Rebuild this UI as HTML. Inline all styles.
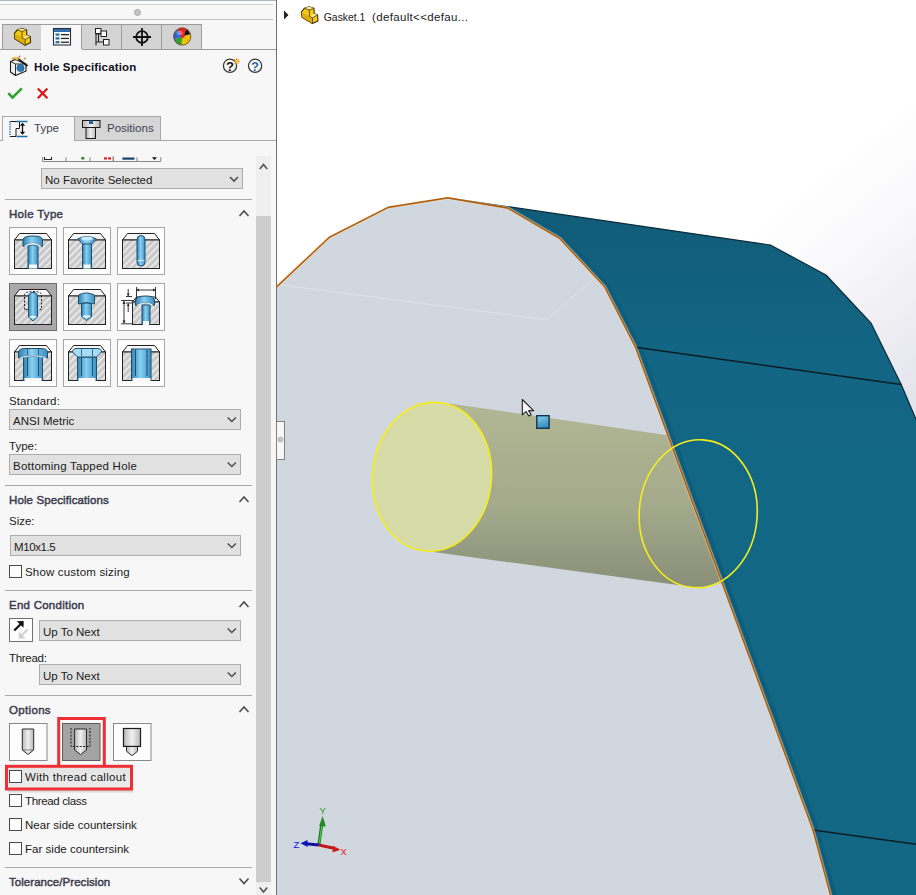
<!DOCTYPE html>
<html><head><meta charset="utf-8">
<style>
*{margin:0;padding:0;box-sizing:border-box}
html,body{width:916px;height:895px;overflow:hidden;background:#fff}
body{position:relative;font-family:"Liberation Sans",sans-serif;font-size:11.5px;color:#1e1e1e}
.a{position:absolute}
#panel{position:absolute;left:0;top:0;width:276px;height:895px;background:#f7f7f7;overflow:hidden}
#vborder{position:absolute;left:276px;top:0;width:1px;height:895px;background:#6f6f6f}
.tab{position:absolute;top:24px;height:25px;background:#d4d4d4;border:1px solid #9c9c9c;border-bottom:none}
.hdr{position:absolute;left:9px;font-weight:normal;font-size:11.5px;color:#3a3a4c;white-space:nowrap;letter-spacing:0px;-webkit-text-stroke:0.45px #3a3a4c}
.lbl{position:absolute;left:9px;white-space:nowrap;color:#1a1a1a}
.dd{position:absolute;height:21px;background:#e1e1e1;border:1px solid #adadad}
.dd span{position:absolute;left:3px;top:4.5px;white-space:nowrap;color:#1a1a1a}
.dd svg{position:absolute;right:4px;top:6px}
.sep{position:absolute;left:5px;width:247px;height:1px;background:#a9a9a9}
.chev{position:absolute;left:237px}
.cb{position:absolute;left:9px;width:13px;height:13px;border:1px solid #4a4a4a;background:#fcfcfc}
.cbl{position:absolute;left:25px;white-space:nowrap;color:#1a1a1a}
.hbtn{position:absolute;width:48px;height:48px;border:1px solid #a0a0a0;background:#fff}
.obtn{position:absolute;top:723px;width:38px;height:38px;border:1px solid #a0a0a0;background:#fff}
</style></head><body>

<div id="panel">
  <!-- top strip -->
  <div class="a" style="left:0;top:0;width:276px;height:1px;background:#a9b6be"></div>
  <div class="a" style="left:0;top:1px;width:276px;height:3px;background:#fafcfd"></div>
  <div class="a" style="left:0;top:4px;width:273px;height:1px;background:#d9d5cd"></div>
  <div class="a" style="left:0;top:19px;width:273px;height:1px;background:#c2c2c2"></div>
  <div class="a" style="left:134px;top:9px;width:7px;height:7px;border-radius:50%;background:#c4c4c4;border:1px solid #a8a8a8"></div>
  <!-- tabs -->
  <div class="a" style="left:0;top:49px;width:276px;height:1px;background:#9c9c9c"></div>
  <div class="tab" style="left:2px;width:40px"></div>
  <div class="a" style="left:41px;top:24px;width:41px;height:26px;background:#f7f7f7;border-top:1px solid #9c9c9c"></div>
  <div class="tab" style="left:81px;width:41px"></div>
  <div class="tab" style="left:121px;width:41px"></div>
  <div class="tab" style="left:161px;width:41px"></div>

  <!-- title -->
  <div class="a" style="left:34px;top:61px;letter-spacing:0.15px;font-weight:bold;font-size:11.5px;color:#101020;white-space:nowrap">Hole Specification</div>

  <!-- Type / Positions tabs -->
  <div class="a" style="left:0;top:140px;width:276px;height:1px;background:#a8a8a8"></div>
  <div class="a" style="left:2px;top:116px;width:73px;height:25px;background:#f7f7f7;border:1px solid #a8a8a8;border-bottom:none"></div>
  <div class="a" style="left:74px;top:116px;width:87px;height:24px;background:#d6d6d6;border:1px solid #a8a8a8;border-bottom:none"></div>
  <div class="a" style="left:34px;top:122px;color:#404050;white-space:nowrap">Type</div>
  <div class="a" style="left:107px;top:122px;color:#404050;white-space:nowrap">Positions</div>

  <!-- favorites -->
  <div class="dd" style="left:41px;top:168px;width:202px"><span>No Favorite Selected</span></div>
  <div class="sep" style="top:199px"></div>

  <div class="hdr" style="top:208px;letter-spacing:0.3px">Hole Type</div>

  <div class="lbl" style="top:395px;letter-spacing:0.12px">Standard:</div>
  <div class="dd" style="left:9px;top:409px;width:232px"><span>ANSI Metric</span></div>
  <div class="lbl" style="top:440px">Type:</div>
  <div class="dd" style="left:9px;top:454px;width:232px"><span style="letter-spacing:0.23px">Bottoming Tapped Hole</span></div>
  <div class="sep" style="top:485px"></div>

  <div class="hdr" style="top:494px;letter-spacing:0.11px">Hole Specifications</div>
  <div class="lbl" style="top:515px">Size:</div>
  <div class="dd" style="left:10px;top:535px;width:231px"><span style="letter-spacing:-0.4px">M10x1.5</span></div>
  <div class="cb" style="top:565px"></div>
  <div class="cbl" style="top:566px;letter-spacing:0.18px">Show custom sizing</div>
  <div class="sep" style="top:590px"></div>

  <div class="hdr" style="top:599px;letter-spacing:0.25px">End Condition</div>
    <div class="dd" style="left:39px;top:620px;width:202px"><span>Up To Next</span></div>
  <div class="lbl" style="top:652px;letter-spacing:-0.3px">Thread:</div>
  <div class="dd" style="left:39px;top:664px;width:202px"><span>Up To Next</span></div>
  <div class="sep" style="top:695px"></div>

  <div class="hdr" style="top:704px;letter-spacing:0.33px">Options</div>

  <div class="a" style="left:7px;top:767px;width:124px;height:21px;background:linear-gradient(#e4e4e4,#ececec)"></div>
  <div class="cb" style="top:770px"></div>
  <div class="cbl" style="top:771px;letter-spacing:0.3px">With thread callout</div>
  <div class="cb" style="top:794px"></div>
  <div class="cbl" style="top:795px;letter-spacing:-0.35px">Thread class</div>
  <div class="cb" style="top:818px"></div>
  <div class="cbl" style="top:819px;letter-spacing:0.03px">Near side countersink</div>
  <div class="cb" style="top:842px"></div>
  <div class="cbl" style="top:843px;letter-spacing:0.03px">Far side countersink</div>
  <div class="sep" style="top:867px"></div>
  <div class="hdr" style="top:876px;letter-spacing:0.05px">Tolerance/Precision</div>

  <!-- scrollbar -->
  <div class="a" style="left:256px;top:156px;width:15px;height:739px;background:#efefef"></div>
  <div class="a" style="left:256px;top:216px;width:15px;height:666px;background:#cdcdcd"></div>
</div>

<svg class="a" style="left:0;top:0" width="276" height="895" viewBox="0 0 276 895">
<!-- tab1 part icon -->
<path d="M14.4,33.3 L17.3,29.8 L21.6,28.4 L26.6,29.8 L26.8,35.2 L30.3,36.6 L30.6,42.6 L25.1,45.3 L14.7,38.8 Z" fill="#f2ca18" stroke="#3e2e00" stroke-width="1.1" stroke-linejoin="round"/>
<path d="M17.3,29.8 L21.6,28.4 L26.6,29.8 L22,31.5 Z" fill="#fbeb9a"/>
<path d="M22,38 L26.8,35.2 L30.3,36.6 L25.2,39.5 Z" fill="#fbe58a"/>
<path d="M14.6,33.6 L22,37.8 L25.2,39.7 L25.1,45 L14.9,38.6 Z" fill="#dcae0c"/>
<path d="M22,31.5 L22,37.8 M25.2,39.5 L25.1,45.2 M17.3,30 L22,31.5 L26.6,29.8 M22,37.8 L25.2,39.5 L30.3,36.6" fill="none" stroke="#4a3800" stroke-width="0.8"/>
<!-- tab2 PM icon -->
<rect x="53.5" y="28.5" width="17" height="16.5" fill="#fff" stroke="#2a2a38" stroke-width="1.1"/>
<rect x="54" y="29" width="16" height="3" fill="#2f6fa6"/>
<rect x="55.5" y="33.5" width="4" height="2.2" fill="#1f6ea8"/><rect x="61" y="34" width="8" height="1.3" fill="#222"/>
<rect x="55.5" y="37.3" width="4" height="2.2" fill="#1f6ea8"/><rect x="61" y="37.8" width="8" height="1.3" fill="#222"/>
<rect x="55.5" y="41.1" width="4" height="2.2" fill="#1f6ea8"/><rect x="61" y="41.6" width="8" height="1.3" fill="#222"/>
<!-- tab3 tree -->
<path d="M96,29 L96,45.5 M96,34 L101,34 M96,42 L103.5,42 M98.5,33 L98.5,42" fill="none" stroke="#222" stroke-width="1.1"/>
<rect x="95.5" y="28.5" width="5.5" height="5" fill="#fff" stroke="#222" stroke-width="1"/>
<rect x="101" y="31" width="5.5" height="5.5" fill="#fff" stroke="#222" stroke-width="1"/>
<rect x="103.5" y="39.5" width="5.5" height="5.5" fill="#fff" stroke="#222" stroke-width="1"/>
<!-- tab4 crosshair -->
<circle cx="142" cy="37" r="5.8" fill="none" stroke="#111" stroke-width="1.8"/>
<path d="M133,37 L151,37 M142,28 L142,46" stroke="#111" stroke-width="1.8"/>
<!-- tab5 appearance ball -->
<g transform="translate(182.2 36.5)">
<path d="M0,0 L-8.08,2.94 A8.6,8.6 0 0 1 -4.93,-7.04 Z" fill="#2f62d8"/>
<path d="M0,0 L-4.93,-7.04 A8.6,8.6 0 0 1 4.30,-7.45 Z" fill="#e42222"/>
<path d="M0,0 L4.30,-7.45 A8.6,8.6 0 0 1 8.31,-2.23 Z" fill="#151515"/>
<path d="M0,0 L8.31,-2.23 A8.6,8.6 0 0 1 -0.75,8.57 Z" fill="#f0c000"/>
<path d="M0,0 L-0.75,8.57 A8.6,8.6 0 0 1 -8.08,2.94 Z" fill="#2ea02e"/>
<path d="M-1,-8 L3.5,-7.5 L2,1.5 L-1.5,1 Z" fill="#e42222"/>
<circle r="8.6" fill="none" stroke="#6a4a30" stroke-width="0.9"/>
<ellipse cx="-2.5" cy="-3.5" rx="3.2" ry="2.2" fill="#fff" opacity="0.3"/>
</g>
<!-- hole spec icon -->
<path d="M10.5,61.5 L15.5,59.5 L26,64 L26,71 L15.5,75.5 L10.5,72 Z" fill="#f0f0f0" stroke="#1a1a1a" stroke-width="1.1" stroke-linejoin="round"/>
<path d="M10.5,61.5 L15.5,64 L26,64 M15.5,64 L15.5,75.5" fill="none" stroke="#1a1a1a" stroke-width="0.9"/>
<circle cx="20.5" cy="68" r="3.6" fill="#2a7ab8" stroke="#1a4a70" stroke-width="0.6"/>
<path d="M17,58 L27.5,66" stroke="#1a1a2a" stroke-width="2.2"/>
<path d="M14,57.5 L18.5,59.5" stroke="#e8c020" stroke-width="2"/>
<circle cx="13" cy="58.5" r="0.9" fill="#e07020"/><circle cx="19.5" cy="56.5" r="0.9" fill="#e07020"/><circle cx="25" cy="58.5" r="0.9" fill="#e07020"/>
<!-- help icons -->
<circle cx="230" cy="65.8" r="6.6" fill="#fafafa" stroke="#3a3a3a" stroke-width="1.3"/>
<text x="230" y="70.6" text-anchor="middle" font-family="Liberation Sans" font-weight="bold" font-size="13" fill="#111">?</text>
<g transform="translate(236.6 61.3)" stroke="#e88a10" stroke-width="1"><path d="M-3.2,0 L3.2,0 M0,-3.2 L0,3.2 M-2.3,-2.3 L2.3,2.3 M-2.3,2.3 L2.3,-2.3"/></g>
<circle cx="236.6" cy="61.3" r="1.6" fill="#f8c030"/>
<circle cx="255.1" cy="65.8" r="6.6" fill="#fafafa" stroke="#3a3a3a" stroke-width="1.3"/>
<text x="255.1" y="70.6" text-anchor="middle" font-family="Liberation Sans" font-weight="bold" font-size="13" fill="#2a6a9a">?</text>
<!-- HOLEICONS -->
<defs>
<pattern id="hatch" width="5" height="5" patternUnits="userSpaceOnUse" patternTransform="rotate(45)">
<rect width="5" height="5" fill="#c9c9c9"/><rect x="0" y="0" width="1.5" height="5" fill="#f0f0f0"/>
</pattern>
<linearGradient id="hb" x1="0" x2="1" y1="0" y2="0">
<stop offset="0" stop-color="#2f80b2"/><stop offset="0.45" stop-color="#8ad0f0"/><stop offset="1" stop-color="#3a8fc2"/>
</linearGradient>
<linearGradient id="gd" x1="0" x2="1" y1="0" y2="0">
<stop offset="0" stop-color="#b8b8b8"/><stop offset="0.5" stop-color="#f0f0f0"/><stop offset="1" stop-color="#b8b8b8"/>
</linearGradient>
</defs>
<rect x="9.5" y="227.5" width="47" height="47" fill="#fdfdfd" stroke="#a6a6a6" stroke-width="1"/>
<path d="M14.5,240 L19.5,233.5 L46.5,233.5 L51.5,240 Z" fill="#f6f6f6" stroke="#222" stroke-width="1"/><rect x="14.5" y="240" width="37.0" height="28.5" fill="url(#hatch)" stroke="#222" stroke-width="1"/>
<rect x="28" y="245" width="10" height="23.5" fill="url(#hb)" stroke="#1d4f6e" stroke-width="1"/>
<path d="M23,246.5 L23,240 Q23,236 33,236 Q42.5,236 42.5,240 L42.5,246.5 Q33,240 23,246.5 Z" fill="url(#hb)" stroke="#1d4f6e" stroke-width="1"/>
<path d="M25,246 Q33,241.5 40.5,246" fill="none" stroke="#e8f6ff" stroke-width="1.3"/>
<rect x="29" y="264.5" width="8" height="4" fill="#f8f8f8"/>
<rect x="63.5" y="227.5" width="47" height="47" fill="#fdfdfd" stroke="#a6a6a6" stroke-width="1"/>
<path d="M68.5,240 L73.5,233.5 L100.5,233.5 L105.5,240 Z" fill="#f6f6f6" stroke="#222" stroke-width="1"/><rect x="68.5" y="240" width="37.0" height="28.5" fill="url(#hatch)" stroke="#222" stroke-width="1"/>
<rect x="82.5" y="243" width="9" height="25.5" fill="url(#hb)" stroke="#1d4f6e" stroke-width="1"/>
<path d="M77.5,239 Q87,234 96.5,239 L91.5,244 L82.5,244 Z" fill="url(#hb)" stroke="#1d4f6e" stroke-width="1"/>
<ellipse cx="87" cy="238.5" rx="6" ry="2" fill="#c8ecff"/>
<rect x="83.5" y="264.5" width="7" height="4" fill="#f8f8f8"/>
<rect x="117.5" y="227.5" width="47" height="47" fill="#fdfdfd" stroke="#a6a6a6" stroke-width="1"/>
<path d="M122.5,240 L127.5,233.5 L154.5,233.5 L159.5,240 Z" fill="#f6f6f6" stroke="#222" stroke-width="1"/><rect x="122.5" y="240" width="37.0" height="28.5" fill="url(#hatch)" stroke="#222" stroke-width="1"/>
<rect x="137" y="235.5" width="8" height="30.5" rx="4" fill="url(#hb)" stroke="#1d4f6e" stroke-width="1"/>
<path d="M137.5,261 Q141,259 144.5,261" fill="none" stroke="#dff2fb" stroke-width="1"/>
<rect x="9.5" y="283.5" width="47" height="47" fill="#a9a9a9" stroke="#6e6e6e" stroke-width="1"/>
<path d="M14.5,296 L19.5,289.5 L46.5,289.5 L51.5,296 Z" fill="#f6f6f6" stroke="#222" stroke-width="1"/><rect x="14.5" y="296" width="37.0" height="28.5" fill="url(#hatch)" stroke="#222" stroke-width="1"/>
<path d="M24.5,309.5 L24.5,295 Q24.5,291.5 33,291.5 Q41.5,291.5 41.5,295 L41.5,309.5 Z" fill="none" stroke="#222" stroke-width="1" stroke-dasharray="2,1.5"/>
<path d="M28.5,317 L28.5,296.5 Q28.5,292.5 33,292.5 Q37.5,292.5 37.5,296.5 L37.5,317 L33,321 Z" fill="url(#hb)" stroke="#1d4f6e" stroke-width="1"/>
<ellipse cx="33" cy="317" rx="3.5" ry="1.3" fill="#dff2fb"/>
<rect x="63.5" y="283.5" width="47" height="47" fill="#fdfdfd" stroke="#a6a6a6" stroke-width="1"/>
<path d="M68.5,296 L73.5,289.5 L100.5,289.5 L105.5,296 Z" fill="#f6f6f6" stroke="#222" stroke-width="1"/><rect x="68.5" y="296" width="37.0" height="28.5" fill="url(#hatch)" stroke="#222" stroke-width="1"/>
<path d="M81.5,303 L81.5,316.5 L86.5,320.5 L91.5,316.5 L91.5,303 Z" fill="url(#hb)" stroke="#1d4f6e" stroke-width="1"/>
<path d="M78.5,304 L78.5,295 Q86.5,291 94.5,295 L94.5,304 Q86.5,301 78.5,304 Z" fill="url(#hb)" stroke="#1d4f6e" stroke-width="1"/>
<ellipse cx="86.5" cy="316.5" rx="4" ry="1.3" fill="#dff2fb"/>
<rect x="117.5" y="283.5" width="47" height="47" fill="#fdfdfd" stroke="#a6a6a6" stroke-width="1"/>
<path d="M132.5,302 L136.5,297 L155.5,297 L159.5,302 Z" fill="#f6f6f6" stroke="#222" stroke-width="1"/><rect x="132.5" y="302" width="27.0" height="22.5" fill="url(#hatch)" stroke="#222" stroke-width="1"/>
<rect x="142" y="305" width="8" height="19.5" fill="url(#hb)" stroke="#1d4f6e" stroke-width="1"/>
<path d="M135.5,305.5 L135.5,300 Q135.5,296 146,296 Q154.5,296 154.5,300 L154.5,305.5 Q146,300 135.5,305.5 Z" fill="url(#hb)" stroke="#1d4f6e" stroke-width="1"/>
<path d="M137.5,305 Q146,301 152.5,305" fill="none" stroke="#e8f6ff" stroke-width="1.2"/>
<rect x="143" y="321" width="6" height="4" fill="#f8f8f8"/>
<path d="M136.5,287 L136.5,299 M155.5,287 L155.5,299 M136.5,290 L155.5,290" stroke="#222" stroke-width="0.9" fill="none"/>
<path d="M124,301 L124,323 M121,300.5 L133,300.5 M121,323.8 L133,323.8 M128.2,289 L128.2,296 M126,296.5 L132,296.5 M128.2,303.5 L128.2,312 M126,303 L132,303" stroke="#222" stroke-width="0.9" fill="none"/><path d="M124,301 L122.5,304 L125.5,304 Z M124,323.5 L122.5,320.5 L125.5,320.5 Z M128.2,296 L126.8,293.5 L129.6,293.5 Z M128.2,303.5 L126.8,306 L129.6,306 Z M136.5,290 L139,288.6 L139,291.4 Z M155.5,290 L153,288.6 L153,291.4 Z" fill="#222"/>
<rect x="9.5" y="339.5" width="47" height="47" fill="#fdfdfd" stroke="#a6a6a6" stroke-width="1"/>
<path d="M14.5,352 L19.5,345.5 L46.5,345.5 L51.5,352 Z" fill="#f6f6f6" stroke="#222" stroke-width="1"/><rect x="14.5" y="352" width="37.0" height="28.5" fill="url(#hatch)" stroke="#222" stroke-width="1"/>
<rect x="23.5" y="356" width="19" height="24.5" fill="url(#hb)" stroke="#1d4f6e" stroke-width="1"/>
<path d="M27.5,357 L27.5,376 M38.5,357 L38.5,376" stroke="#1d4f6e" stroke-width="1"/>
<path d="M18.5,358 L18.5,352 Q18.5,348.5 26,348.5 L40,348.5 Q47.5,348.5 47.5,352 L47.5,358 Q33,353 18.5,358 Z" fill="url(#hb)" stroke="#1d4f6e" stroke-width="1"/>
<path d="M20.5,357.5 Q33,354 45.5,357.5" fill="none" stroke="#e8f6ff" stroke-width="1.2"/>
<path d="M27.5,349 L27.5,355 M38.5,349 L38.5,355" stroke="#1d4f6e" stroke-width="0.8"/>
<rect x="24.5" y="378" width="17" height="3" fill="#f8f8f8"/>
<rect x="63.5" y="339.5" width="47" height="47" fill="#fdfdfd" stroke="#a6a6a6" stroke-width="1"/>
<path d="M68.5,352 L73.5,345.5 L100.5,345.5 L105.5,352 Z" fill="#f6f6f6" stroke="#222" stroke-width="1"/><rect x="68.5" y="352" width="37.0" height="28.5" fill="url(#hatch)" stroke="#222" stroke-width="1"/>
<rect x="77.5" y="357" width="19" height="23.5" fill="url(#hb)" stroke="#1d4f6e" stroke-width="1"/>
<path d="M81.5,357 L81.5,376 M92.5,357 L92.5,376" stroke="#1d4f6e" stroke-width="1"/>
<path d="M72.5,352 Q72.5,348.5 77,348.5 L97,348.5 Q101.5,348.5 101.5,352 L96.5,357 L77.5,357 Z" fill="#a6dcf4" stroke="#1d4f6e" stroke-width="1"/>
<path d="M81.5,349 L81.5,356 M92.5,349 L92.5,356" stroke="#1d4f6e" stroke-width="0.8"/>
<rect x="78.5" y="378" width="17" height="3" fill="#f8f8f8"/>
<rect x="117.5" y="339.5" width="47" height="47" fill="#fdfdfd" stroke="#a6a6a6" stroke-width="1"/>
<path d="M122.5,352 L127.5,345.5 L154.5,345.5 L159.5,352 Z" fill="#f6f6f6" stroke="#222" stroke-width="1"/><rect x="122.5" y="352" width="37.0" height="28.5" fill="url(#hatch)" stroke="#222" stroke-width="1"/>
<rect x="131.5" y="349" width="19.5" height="31.5" fill="url(#hb)" stroke="#1d4f6e" stroke-width="1"/>
<path d="M135.5,350 L135.5,376 M147,350 L147,376" stroke="#1d4f6e" stroke-width="1"/>
<rect x="132.5" y="378" width="18" height="3" fill="#f8f8f8"/>

<!-- /HOLEICONS -->

<!-- type icon -->
<path d="M10,121 L10,137" stroke="#1f6ea8" stroke-width="1.3" stroke-dasharray="1.5,1"/>
<path d="M10.5,121.5 L19.5,121.5 L19.5,128.5 L16,128.5 L16,136.5 L10.5,136.5" fill="none" stroke="#1a1a1a" stroke-width="1"/>
<path d="M16.5,121.5 L27.5,121.5 M16.5,136.5 L27.5,136.5" stroke="#1f6ea8" stroke-width="1.5"/>
<path d="M22.5,123.5 L22.5,134" stroke="#111" stroke-width="1.3"/>
<path d="M19.8,125.8 L22.5,122.8 L25.2,125.8 Z M19.8,131.8 L22.5,134.8 L25.2,131.8 Z" fill="#111"/>
<!-- positions icon -->
<rect x="82.5" y="120.5" width="17.5" height="7" fill="url(#gd)" stroke="#1a1a1a" stroke-width="1"/>
<rect x="86" y="127.5" width="9.5" height="11" fill="url(#gd)" stroke="#1a1a1a" stroke-width="1"/>
<rect x="89.3" y="120.3" width="3.4" height="3.4" fill="#1f6ea8" stroke="#0e3e60" stroke-width="0.6"/>
<!-- favorites toolbar -->
<path d="M42.5,157 L42.5,161.5 L160.8,161.5 L160.8,157" fill="none" stroke="#8a8a8a" stroke-width="1"/>
<path d="M44.5,157 L44.5,159.5 L51.5,159.5 L51.5,157" fill="none" stroke="#222" stroke-width="1.1"/>
<path d="M66,157.5 L66,161 M90,157.5 L90,161 M137,157.5 L137,161" stroke="#9a9a9a" stroke-width="1.3"/>
<path d="M113.2,156.5 L113.2,161" stroke="#555" stroke-width="1"/>
<rect x="81.3" y="157" width="3" height="2.5" fill="#2a8a2a"/>
<rect x="104" y="157.3" width="3" height="2.2" fill="#e02020"/><rect x="108" y="157.3" width="3" height="2.2" fill="#e02020"/>
<rect x="122.4" y="157.5" width="12" height="2.2" fill="#1a3e6a"/>
<path d="M152,157.3 L157,157.3 L154.5,160 Z" fill="#111"/>
<!-- section chevrons -->
<g fill="none" stroke="#4e4e4e" stroke-width="1.6">
<path d="M239.5,216 L244,211 L248.5,216"/>
<path d="M239.5,502 L244,497 L248.5,502"/>
<path d="M239.5,607 L244,602 L248.5,607"/>
<path d="M239.5,712 L244,707 L248.5,712"/>
<path d="M239.5,878.5 L244,883.5 L248.5,878.5"/>
</g>
<!-- scrollbar arrows -->
<g fill="none" stroke="#505050" stroke-width="1.6">
<path d="M259.8,169 L263.5,164.5 L267.2,169"/>
<path d="M259.8,887.5 L263.5,892 L267.2,887.5"/>
</g>
<!-- dropdown chevrons -->
<g fill="none" stroke="#505050" stroke-width="1.6">
<path d="M230,177 L234,181 L238,177"/>
<path d="M227.7,417.5 L231.8,421.5 L235.9,417.5"/>
<path d="M227.7,462.5 L231.8,466.5 L235.9,462.5"/>
<path d="M227.7,543.5 L231.8,547.5 L235.9,543.5"/>
<path d="M227.7,628.5 L231.8,632.5 L235.9,628.5"/>
<path d="M227.7,672.5 L231.8,676.5 L235.9,672.5"/>
</g>
<!-- reverse direction icon -->
<rect x="9.5" y="618.5" width="23" height="23" fill="#fdfdfd" stroke="#707070" stroke-width="1"/>
<path d="M14.3,630.6 L21,623.8" stroke="#111" stroke-width="2.2"/>
<path d="M16.8,621.2 L23.7,621 L23.5,627.7 Z" fill="#111"/>
<path d="M27.5,629.5 L20.5,636.5" stroke="#cfcfcf" stroke-width="2"/>
<path d="M18.8,631.5 L18.8,638.5 L25.5,638.5 Z" fill="#cfcfcf"/>
<!-- option buttons -->
<rect x="9.5" y="723.5" width="37.5" height="37" fill="#fdfdfd" stroke="#8a8a8a" stroke-width="1"/>
<path d="M22.3,729 L33.7,729 L33.7,750 L28,754.5 L22.3,750 Z" fill="url(#gd)" stroke="#2a2a2a" stroke-width="1"/>
<path d="M22.3,750 L33.7,750" stroke="#555" stroke-width="0.7"/>
<rect x="62.5" y="723.5" width="37.5" height="37" fill="#a8a8a8" stroke="#5e5e5e" stroke-width="1"/>
<path d="M74.6,729 L86.5,729 L86.5,750 L80.5,754.5 L74.6,750 Z" fill="url(#gd)" stroke="#2a2a2a" stroke-width="1"/>
<path d="M71,728 L71,746.5 L90,746.5 L90,728" fill="none" stroke="#1a1a1a" stroke-width="1" stroke-dasharray="2,1.4"/>
<rect x="113.5" y="723.5" width="37.5" height="37" fill="#fdfdfd" stroke="#8a8a8a" stroke-width="1"/>
<path d="M126.5,746.4 L137.5,746.4 L137.5,751.3 L132,755.7 L126.5,751.3 Z" fill="url(#gd)" stroke="#2a2a2a" stroke-width="1"/>
<rect x="123.5" y="728.5" width="17" height="17.9" fill="url(#gd)" stroke="#1a1a1a" stroke-width="1.2"/>
<!-- red highlights -->
<rect x="60" y="720" width="43" height="46" fill="#fafafa"/>
<rect x="62.5" y="723.5" width="37.5" height="37" fill="#a4a4a4" stroke="#5e5e5e" stroke-width="1"/>
<path d="M74.6,729 L86.5,729 L86.5,750 L80.5,754.5 L74.6,750 Z" fill="url(#gd)" stroke="#2a2a2a" stroke-width="1"/>
<path d="M71,728 L71,746.5 L90,746.5 L90,728" fill="none" stroke="#1a1a1a" stroke-width="1" stroke-dasharray="2,1.4"/>
<path d="M58.7,766 L58.7,718.5 L104.3,718.5 L104.3,766" fill="none" stroke="#ee3036" stroke-width="3"/>
<rect x="6.5" y="766.3" width="125" height="22.7" fill="none" stroke="#ee3036" stroke-width="3"/>
<path d="M8,791.5 L133,791.5" stroke="#000" stroke-opacity="0.12" stroke-width="2"/>

<!-- check / x -->
<path d="M8.3,93.2 L12.5,97.6 L21.8,88.4" fill="none" stroke="#2fa12f" stroke-width="2.6"/>
<path d="M37.8,88.5 L47.4,98.2 M47.4,88.5 L37.8,98.2" stroke="#e21313" stroke-width="2.2"/>
</svg>

<div id="vborder"></div>

<!-- viewport -->
<svg class="a" style="left:0;top:0" width="916" height="895" viewBox="0 0 916 895">
<defs>
<linearGradient id="bg" x1="740" y1="230" x2="916" y2="450" gradientUnits="userSpaceOnUse">
<stop offset="0" stop-color="#ffffff"/><stop offset="0.3" stop-color="#f9f9fb"/><stop offset="1" stop-color="#dedee8"/>
</linearGradient>
<linearGradient id="cyl" x1="0" y1="405" x2="0" y2="585" gradientUnits="userSpaceOnUse">
<stop offset="0" stop-color="#b1b794"/><stop offset="0.55" stop-color="#a4aa8b"/><stop offset="1" stop-color="#8a9078"/>
</linearGradient>
<linearGradient id="bluef" x1="0" y1="200" x2="0" y2="500" gradientUnits="userSpaceOnUse"><stop offset="0" stop-color="#115b78"/><stop offset="0.5" stop-color="#126683"/><stop offset="1" stop-color="#126784"/></linearGradient>
<clipPath id="vp"><rect x="277" y="0" width="639" height="895"/></clipPath>
</defs>
<g clip-path="url(#vp)">
<rect x="277" y="0" width="639" height="895" fill="url(#bg)"/>
<!-- front face -->
<polygon points="270,293 329.5,237.2 388.4,207.3 447.6,197.9 507.7,208 559.7,238.5 604.8,287 635.5,347.2 813,830 831.9,900 270,900" fill="#d0d7df"/>
<polyline points="280,284.8 547,319.7 592.8,279.3" fill="none" stroke="#dfe3e6" stroke-width="1"/>
<!-- cylinder -->
<path d="M449.5,403.5 L700.5,440 L757,513 L745,560 L725,582 L700,588 L430,551.6 Z" fill="url(#cyl)"/>
<!-- blue face -->
<polygon points="447.6,197.9 770.5,245 826.3,275.3 871,323 901.2,384.5 930,452 930,900 831.9,900 813,830 635.5,347.2 604.8,287 559.7,238.5 507.7,208" fill="url(#bluef)"/>
<clipPath id="bluec"><polygon points="447.6,197.9 770.5,245 826.3,275.3 871,323 901.2,384.5 930,452 930,900 831.9,900 813,830 635.5,347.2 604.8,287 559.7,238.5 507.7,208"/></clipPath>
<g clip-path="url(#bluec)" fill="none" stroke-linejoin="round">
<polyline points="507.7,208 559.7,238.5 604.8,287 635.5,347.2 813,830 831.9,900" stroke="#0f5a77" stroke-width="12" stroke-opacity="0.7"/>
<polyline points="507.7,208 559.7,238.5 604.8,287 635.5,347.2 813,830 831.9,900" stroke="#1a7290" stroke-width="4.5" stroke-opacity="0.85"/>
</g>
<polyline points="447.6,197.9 770.5,245 826.3,275.3 871,323 901.2,384.5 930,452" fill="none" stroke="#0d2a36" stroke-width="1.2"/>
<line x1="635.5" y1="347.2" x2="901.2" y2="384.5" stroke="#0a1e28" stroke-width="1.5"/>
<line x1="813" y1="830" x2="920" y2="844.8" stroke="#0a1e28" stroke-width="1.5"/>
<!-- orange silhouette -->
<polyline points="270,293 329.5,237.2 388.4,207.3 447.6,197.9 507.7,208 559.7,238.5 604.8,287 635.5,347.2 813,830 831.9,900" fill="none" stroke="#e9f0f4" stroke-width="3" stroke-opacity="0.5"/>
<polyline points="270,293 329.5,237.2 388.4,207.3 447.6,197.9 507.7,208 559.7,238.5 604.8,287 635.5,347.2 813,830 831.9,900" fill="none" stroke="#d77a18" stroke-width="1.8"/>
<polyline points="270,293 329.5,237.2 388.4,207.3 447.6,197.9 507.7,208 559.7,238.5 604.8,287 635.5,347.2 813,830 831.9,900" fill="none" stroke="#6a3a08" stroke-width="0.5"/>
<!-- ellipses -->
<ellipse cx="431.9" cy="476.8" rx="59.5" ry="74.5" transform="rotate(5 431.9 476.8)" fill="#d7dba8" stroke="#f5ee1c" stroke-width="1.6"/>
<ellipse cx="698.2" cy="513.7" rx="59" ry="74" transform="rotate(3.5 698.2 513.7)" fill="none" stroke="#f5ee1c" stroke-width="1.6"/>
<!-- cursor -->
<path d="M522.3,399.5 L522.3,414.8 L526,411.6 L528.8,416 L531.2,414.8 L528.6,410.6 L533.8,410.8 Z" fill="#f6f4f4" stroke="#1e1e1e" stroke-width="1.1" stroke-linejoin="round"/>
<linearGradient id="sq" x1="0" y1="0" x2="0.3" y2="1"><stop offset="0" stop-color="#86d0ee"/><stop offset="1" stop-color="#3a8cbc"/></linearGradient>
<rect x="536.8" y="415.7" width="12.3" height="12.6" fill="url(#sq)" stroke="#0c3452" stroke-width="1.4"/>
<!-- triad -->
<line x1="318.8" y1="845" x2="321.8" y2="824" stroke="#1d7a1d" stroke-width="3"/>
<line x1="319.3" y1="843" x2="322" y2="824" stroke="#5ccf5c" stroke-width="1"/>
<path d="M322.6,816 L319.2,826 L325.8,826.5 Z" fill="#1f8a1f"/>
<text x="319.5" y="814" font-family="Liberation Sans" font-size="9.5" fill="#2a9a2a">Y</text>
<line x1="318.8" y1="845" x2="306" y2="843.8" stroke="#1010a0" stroke-width="3"/>
<path d="M300.5,843.3 L307.5,840 L307.6,847 Z" fill="#1414b8"/>
<text x="293.5" y="848" font-family="Liberation Sans" font-size="9.5" fill="#1010e0">Z</text>
<line x1="318.8" y1="845" x2="334" y2="848.3" stroke="#c01818" stroke-width="3"/>
<path d="M340.5,849.7 L333,845.8 L332.5,852.5 Z" fill="#d01c1c"/>
<text x="340.5" y="855" font-family="Liberation Sans" font-size="9.5" fill="#e82020">X</text>
</g>
<!-- view handle -->
<rect x="276.5" y="421.5" width="8" height="38" fill="#f8f8f8" stroke="#808080" stroke-width="1"/>
<circle cx="280.5" cy="439.5" r="2.5" fill="#c8c8c8" stroke="#a8a8a8" stroke-width="0.8"/>
<!-- tree item -->
<!-- gasket icon -->
<path d="M301.3,12.2 L304.5,8.2 L309,6.8 L314,8.3 L314.2,13.6 L317.6,15 L317.9,20.9 L312.4,23.6 L302,17.3 Z" fill="#f2ca18" stroke="#3e2e00" stroke-width="1.1" stroke-linejoin="round"/>
<path d="M304.5,8.2 L309,6.8 L314,8.3 L309.4,10 Z" fill="#fbeb9a"/>
<path d="M309.4,16.4 L314.2,13.6 L317.6,15 L312.5,17.9 Z" fill="#fbe58a"/>
<path d="M301.6,12.5 L309.4,16.3 L312.5,18.1 L312.4,23.3 L302.2,17.2 Z" fill="#dcae0c"/>
<path d="M309.4,10 L309.4,16.3 M312.5,17.9 L312.4,23.6 M304.5,8.4 L309.4,10 L314,8.3 M309.4,16.3 L312.5,17.9 L317.6,15" fill="none" stroke="#4a3800" stroke-width="0.8"/>

<path d="M284,10.5 L288.5,15 L284,19.5 Z" fill="#222"/>
<text x="323.8" y="20.5" font-family="Liberation Sans" font-size="11.5" fill="#1a1a1a" textLength="41.5" lengthAdjust="spacingAndGlyphs">Gasket.1</text>
<text x="372" y="20.5" font-family="Liberation Sans" font-size="11.5" fill="#1a1a1a" textLength="96" lengthAdjust="spacing">(default&lt;&lt;defau...</text>
</svg>

</body></html>
